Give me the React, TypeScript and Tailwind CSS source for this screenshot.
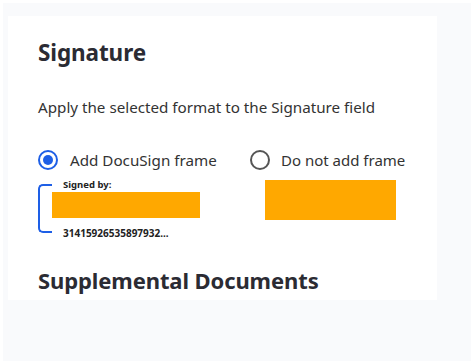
import React from "react";

export default function App() {
  return (
    <div className="w-[474px] h-[364px] bg-white p-[3px]" style={{ fontFamily: '"Noto Sans", Lato, sans-serif' }}>
      <div className="h-full w-full bg-[#f9fafc] pt-[13px] pl-[5px]">
        <div className="w-[429px] h-[284px] bg-white pl-[30px] pt-[23px] text-[#2b2b33]">
          <h1 className="text-[22.5px] leading-[28px] font-bold tracking-[-0.1px]">Signature</h1>
          <p className="mt-[30px] text-[15.2px] leading-[20px] text-[#333]">
            Apply the selected format to the Signature field
          </p>
          <div className="mt-[31px] flex">
            <div className="w-[212px]">
              <div className="flex items-center h-[24px]">
                <span className="w-[20px] h-[20px] rounded-full border-2 border-[#1e5fe6] flex items-center justify-center">
                  <span className="w-[10px] h-[10px] rounded-full bg-[#1e5fe6]" />
                </span>
                <span className="ml-[12px] text-[15.2px] leading-[20px] text-[#333]">Add DocuSign frame</span>
              </div>
              <div className="mt-[12px] flex">
                <div className="w-[14px] h-[49px] border-2 border-r-0 border-[#1e5fe6] rounded-l-[5px]" />
                <div className="relative w-[160px] h-[49px]">
                  <div className="absolute left-[11px] -top-[5px] text-[9.5px] leading-[12px] font-bold text-[#222]">Signed by:</div>
                  <div className="absolute left-0 top-[8px] w-[148px] h-[26px] bg-[#ffa800]" />
                  <div className="absolute left-[11px] top-[43px] text-[10px] leading-[12px] font-bold text-[#222]">31415926535897932...</div>
                </div>
              </div>
            </div>
            <div>
              <div className="flex items-center h-[24px]">
                <span className="w-[20px] h-[20px] rounded-full border-2 border-[#555]" />
                <span className="ml-[11px] text-[15px] leading-[20px] text-[#333]">Do not add frame</span>
              </div>
              <div className="mt-[8px] ml-[15px] w-[131px] h-[40px] bg-[#ffa800]" />
            </div>
          </div>
          <h2 className="mt-[33px] text-[22px] leading-[28px] font-bold tracking-[-0.1px]">Supplemental Documents</h2>
        </div>
      </div>
    </div>
  );
}
